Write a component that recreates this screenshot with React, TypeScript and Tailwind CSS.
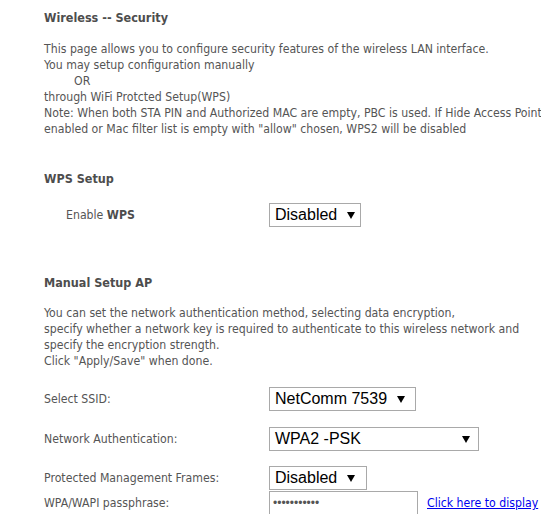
import React from 'react'

const Arrow = () => (
  <svg width="8" height="7" viewBox="0 0 8 7" className="shrink-0">
    <path d="M0 0 L8 0 L4 7 Z" fill="#000" />
  </svg>
)

function Select({ value, width, spread }: { value: string; width: string; spread?: boolean }) {
  return (
    <div
      className={`${width} h-[24px] border border-[#a9a9a9] bg-white flex items-center pl-[5px] pr-[8px] gap-[10px] ${
        spread ? 'justify-between' : ''
      }`}
      style={{ fontFamily: 'Arial, "Liberation Sans", sans-serif' }}
    >
      <span className="text-[16px] leading-none text-black whitespace-nowrap">{value}</span>
      <Arrow />
    </div>
  )
}

export default function App() {
  return (
    <div
      className="w-[541px] h-[514px] overflow-hidden bg-white text-[#555] text-[12.2px] leading-[16px] pl-[44px] pt-[10px]"
      style={{ fontFamily: 'Tahoma, "DejaVu Sans Condensed", "DejaVu Sans", sans-serif' }}
    >
      <h1 className="font-bold text-[12.5px] text-[#4d4d4d]">Wireless -- Security</h1>

      <div className="mt-[15px] whitespace-nowrap">
        <p>This page allows you to configure security features of the wireless LAN interface.</p>
        <p>You may setup configuration manually</p>
        <p className="pl-[30px]">OR</p>
        <p>through WiFi Protcted Setup(WPS)</p>
        <p>Note: When both STA PIN and Authorized MAC are empty, PBC is used. If Hide Access Point is</p>
        <p>enabled or Mac filter list is empty with "allow" chosen, WPS2 will be disabled</p>
      </div>

      <h2 className="font-bold text-[12.5px] text-[#4d4d4d] mt-[34px]">WPS Setup</h2>

      <div className="grid grid-cols-[225px_1fr] items-center mt-[16px]">
        <span className="pl-[22px]">
          Enable <b className="text-[#4d4d4d]">WPS</b>
        </span>
        <Select value="Disabled" width="w-[92px]" />
      </div>

      <h2 className="font-bold text-[12.5px] text-[#4d4d4d] mt-[48px]">Manual Setup AP</h2>

      <div className="mt-[14px] whitespace-nowrap">
        <p>You can set the network authentication method, selecting data encryption,</p>
        <p>specify whether a network key is required to authenticate to this wireless network and</p>
        <p>specify the encryption strength.</p>
        <p>Click "Apply/Save" when done.</p>
      </div>

      <div className="grid grid-cols-[225px_1fr] items-center mt-[18px] gap-y-[16px]">
        <span>Select SSID:</span>
        <Select value="NetComm 7539" width="w-[147px]" />
        <span>Network Authentication:</span>
        <Select value="WPA2 -PSK" width="w-[210px]" spread />
      </div>

      <div className="grid grid-cols-[225px_1fr] items-center mt-[15px] gap-y-[1px]">
        <span>Protected Management Frames:</span>
        <Select value="Disabled" width="w-[98px]" />
        <span>WPA/WAPI passphrase:</span>
        <div className="flex items-center gap-[9px] whitespace-nowrap">
          <input
            type="password"
            readOnly
            value="xxxxxxxxxxx"
            className="w-[149px] h-[24px] border border-[#a9a9a9] px-[3px] text-[#555] text-[12px] outline-none"
            style={{ fontFamily: 'Arial, "Liberation Sans", sans-serif' }}
          />
          <a href="#" className="text-[#0000ee] underline">
            Click here to display
          </a>
        </div>
      </div>
    </div>
  )
}
